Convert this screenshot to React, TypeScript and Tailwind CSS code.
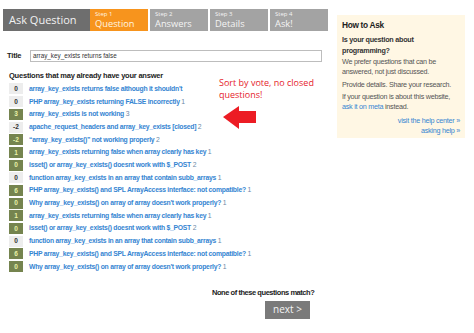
import React from "react";

type Row = { v: number; acc: boolean; t: string; c: number | null };

const base: Row[] = [
  { v: 0, acc: false, t: "array_key_exists returns false although it shouldn't", c: null },
  { v: 0, acc: false, t: "PHP array_key_exists returning FALSE incorrectly", c: 1 },
  { v: 3, acc: true, t: "array_key_exists is not working", c: 3 },
  { v: -2, acc: false, t: "apache_request_headers and array_key_exists [closed]", c: 2 },
  { v: -2, acc: true, t: "\u201Carray_key_exists()\u201D not working properly", c: 2 },
];
const rep: Row[] = [
  { v: 1, acc: true, t: "array_key_exists returning false when array clearly has key", c: 1 },
  { v: 0, acc: true, t: "isset() or array_key_exists() doesnt work with $_POST", c: 2 },
  { v: 0, acc: false, t: "function array_key_exists in an array that contain subb_arrays", c: 1 },
  { v: 6, acc: true, t: "PHP array_key_exists() and SPL ArrayAccess interface: not compatible?", c: 1 },
  { v: 0, acc: true, t: "Why array_key_exists() on array of array doesn't work properly?", c: 1 },
];
const rows = [...base, ...rep, ...rep];

const sans = "font-['Liberation_Sans',Arial,sans-serif]";
const open = "font-['Open_Sans',sans-serif]";

function Step({ n, label, active }: { n: number; label: string; active?: boolean }) {
  return (
    <div
      className={`w-[58px] h-full pl-[5px] flex flex-col ${open} ${
        active ? "bg-[#f7941d] text-[#fff4e0]" : "bg-[#a3a3a3] text-[#f4f4f4]"
      }`}
    >
      <div className="text-[6px] leading-[7px] mt-[2px]">Step {n}</div>
      <div className="text-[9.3px] leading-[11px]">{label}</div>
    </div>
  );
}

export default function App() {
  return (
    <div className={`relative w-[474px] h-[333px] bg-white overflow-hidden flex ${sans}`}>
      <div className="w-[334px] pl-[3px] pt-[9px] flex flex-col">
        {/* header */}
        <div className="h-[22px] flex">
          <div className={`w-[87px] bg-[#6e6e6e] text-[#f2f2f2] ${open} text-[11px] leading-[22px] pl-[6px]`}>
            Ask Question
          </div>
          <Step n={1} label="Question" active />
          <div className="w-[2px]" />
          <Step n={2} label="Answers" />
          <div className="w-[2px]" />
          <Step n={3} label="Details" />
          <div className="w-[2px]" />
          <Step n={4} label="Ask!" />
        </div>

        {/* title */}
        <div className="mt-[19px] h-[12px] flex items-center">
          <div className="w-[27px] pl-[4px] text-[7.5px] font-bold text-[#222] tracking-[-0.2px]">Title</div>
          <div className="w-[292px] h-[12px] border border-[#bdbdbd] flex items-center pl-[2px] text-[6.3px] text-[#333]">
            array_key_exists returns false
          </div>
        </div>

        {/* heading */}
        <div className="mt-[9px] h-[10px] leading-[10px] pl-[6px] text-[7.5px] font-bold text-[#222] tracking-[-0.22px]">
          Questions that may already have your answer
        </div>

        <div className="mt-[1.65px] flex flex-col">
          {rows.map((r, i) => (
            <div key={i} className="h-[12.7px] flex items-center pl-[6px]">
              <div
                className={`w-[14px] h-[11px] flex items-center justify-center text-[6.5px] font-bold ${
                  r.acc ? "bg-[#75844f] text-[#e9f2a8]" : "bg-[#ededed] text-[#333]"
                }`}
              >
                {r.v}
              </div>
              <div className="ml-[6px] text-[6.8px] tracking-[-0.25px] whitespace-nowrap">
                <span className="font-bold text-[#3585d2]">{r.t}</span>
                {r.c !== null && <span className="text-[#6f8aa6]"> {r.c}</span>}
              </div>
            </div>
          ))}
        </div>

        <div className="mt-[14.8px] ml-[209px] h-[10px] leading-[10px] text-[7.5px] font-bold text-[#222] tracking-[-0.45px] whitespace-nowrap">
          None of these questions match?
        </div>
        <div
          className={`mt-[3px] ml-[262px] w-[45px] h-[18px] bg-[#7a7a7a] text-[#f4f4f4] ${open} text-[10px] flex items-center justify-center`}
        >
          next &gt;
        </div>
      </div>

      {/* sidebar */}
      <div className="mt-[15px] ml-[3px] w-[128px] h-[123px] bg-[#fff7e4] pl-[5px] pr-[5px] pt-[5px] text-[7.2px] tracking-[-0.25px] text-[#555]">
        <div className="h-[10px] leading-[10px] text-[8.3px] font-bold text-[#222] tracking-[-0.3px]">How to Ask</div>
        <div className="mt-[3.5px] leading-[11px] font-bold text-[#333]">
          Is your question about
          <br />
          programming?
        </div>
        <div className="mt-[1.25px] leading-[10.5px]">
          We prefer questions that can be
          <br />
          answered, not just discussed.
        </div>
        <div className="mt-[2px] leading-[10px]">Provide details. Share your research.</div>
        <div className="mt-[2.5px] leading-[10px]">
          If your question is about this website,
          <br />
          <span className="text-[#3585d2]">ask it on meta</span> instead.
        </div>
        <div className="mt-[3.5px] leading-[10px] text-right text-[#3585d2]">
          visit the help center »
          <br />
          asking help »
        </div>
      </div>

      {/* annotation */}
      <div className={`absolute left-[219px] top-[77px] ${open} text-[9px] leading-[11.5px] text-[#e5222b]`}>
        Sort by vote, no closed
        <br />
        questions!
      </div>
      <svg className="absolute left-[222px] top-[105px]" width="36" height="26" viewBox="0 0 36 26">
        <polygon points="1,12 17,1 17,6 34,6 34,18 17,18 17,24" fill="#ec1c24" />
      </svg>
    </div>
  );
}
